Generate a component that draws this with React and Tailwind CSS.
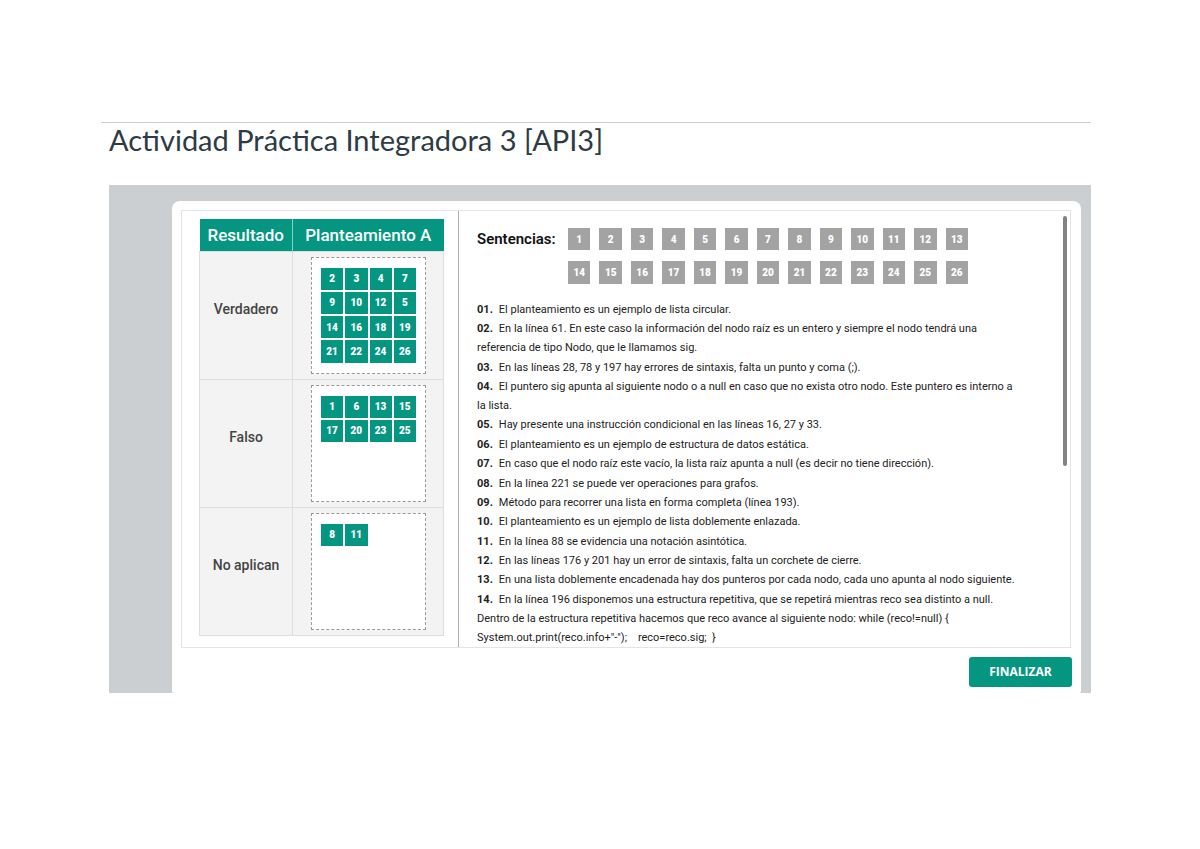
import React, { useState } from "react";

const results = [
    { label: "Verdadero", items: [2, 3, 4, 7, 9, 10, 12, 5, 14, 16, 18, 19, 21, 22, 24, 26] },
    { label: "Falso", items: [1, 6, 13, 15, 17, 20, 23, 25] },
    { label: "No aplican", items: [8, 11] },
];

// one entry per sentence, split where the text breaks
const sentences = [
    ["El planteamiento es un ejemplo de lista circular."],
    [
        "En la línea 61. En este caso la información del nodo raíz es un entero y siempre el nodo tendrá una",
        "referencia de tipo Nodo, que le llamamos sig.",
    ],
    ["En las líneas 28, 78 y 197 hay errores de sintaxis, falta un punto y coma (;)."],
    [
        "El puntero sig apunta al siguiente nodo o a null en caso que no exista otro nodo. Este puntero es interno a",
        "la lista.",
    ],
    ["Hay presente una instrucción condicional en las líneas 16, 27 y 33."],
    ["El planteamiento es un ejemplo de estructura de datos estática."],
    ["En caso que el nodo raíz este vacío, la lista raíz apunta a null (es decir no tiene dirección)."],
    ["En la línea 221 se puede ver operaciones para grafos."],
    ["Método para recorrer una lista en forma completa (línea 193)."],
    ["El planteamiento es un ejemplo de lista doblemente enlazada."],
    ["En la línea 88 se evidencia una notación asintótica."],
    ["En las líneas 176 y 201 hay un error de sintaxis, falta un corchete de cierre."],
    ["En una lista doblemente encadenada hay dos punteros por cada nodo, cada uno apunta al nodo siguiente."],
    [
        "En la línea 196 disponemos una estructura repetitiva, que se repetirá mientras reco sea distinto a null.",
        "Dentro de la estructura repetitiva hacemos que reco avance al siguiente nodo: while (reco!=null) {",
        "System.out.print(reco.info+\"-\");    reco=reco.sig;  }",
    ],
];

const numbers = Array.from({ length: 26 }, (_, i) => i + 1);

const ResultsTable = () => (
    <table className="w-[245px] table-fixed border-collapse text-center">
        <thead>
            <tr className="h-8 bg-[#059681] text-[17px] leading-6 text-white">
                <th scope="col" className="w-[93px] border-r border-[#8fcdc3] font-medium">Resultado</th>
                <th scope="col" className="font-medium">Planteamiento A</th>
            </tr>
        </thead>
        <tbody>
            {results.map((row) => (
                <tr key={row.label} className="h-32 bg-[#f3f3f3]">
                    <th scope="row" className="border border-[#dedede] pb-3 text-sm font-medium text-[#444444]">
                        {row.label}
                    </th>
                    <td className="border border-[#dedede] p-0">
                        <div className="ml-[18px] h-[117px] w-[115px] border border-dashed border-[#999999] bg-white px-[9px] pt-[10px]">
                            <div className="grid grid-cols-4 gap-[2px]">
                                {row.items.map((n) => (
                                    <button
                                        key={n}
                                        type="button"
                                        className="flex aspect-square items-center justify-center bg-[#059681] text-[10px] font-black text-white"
                                    >
                                        {n}
                                    </button>
                                ))}
                            </div>
                        </div>
                    </td>
                </tr>
            ))}
        </tbody>
    </table>
);

const App = () => {
    const [selected, setSelected] = useState(null);

    return (
        <div className="min-h-screen bg-white pt-[122px] pr-[109px] pl-[101px] font-[Roboto,sans-serif]">
            <div className="border-t border-[#c7cdd1] pl-2">
                <h1 className="h-[62px] font-[Lato,sans-serif] text-[29px] leading-[34px] text-[#2d3b45]">
                    Actividad Práctica Integradora 3 [API3]
                </h1>
                <main className="bg-[#cbcfd2] pt-4 pr-[10px] pl-[63px]">
                    <div className="rounded-t-lg rounded-b-xs bg-white px-[9px] pt-[9px] pb-[6px]">
                        <div className="mr-px flex h-[438px] border border-[#e4e4e4]">
                            <section className="w-[277px] shrink-0 border-r border-[#b0b0b0] pt-2 pl-[17px]">
                                <ResultsTable />
                            </section>
                            <section className="relative min-w-0 flex-1">
                                <div className="flex h-full flex-col overflow-hidden pr-9 pl-[18px]">
                                    <div className="flex pt-[17px]">
                                        <h2 className="w-[91px] shrink-0 text-[15px] leading-[22px] font-semibold text-[#111111]">
                                            Sentencias:
                                        </h2>
                                        <div className="grid w-[400px] grid-cols-13 gap-x-[9px] gap-y-[11px]">
                                            {numbers.map((n) => (
                                                <button
                                                    key={n}
                                                    type="button"
                                                    aria-pressed={selected === n}
                                                    onClick={() => setSelected(n)}
                                                    className="flex aspect-square items-center justify-center bg-[#a3a3a3] text-[10px] font-black text-white"
                                                >
                                                    {n}
                                                </button>
                                            ))}
                                        </div>
                                    </div>
                                    <div className="mt-4 flex flex-1 flex-col justify-between text-[11px] leading-[19px] text-[#222222]">
                                        {sentences.map((lines, i) => (
                                            <div key={i}>
                                                {lines.map((line, j) => (
                                                    <p key={j} className="whitespace-pre-wrap">
                                                        {j === 0 && (
                                                            <b className="mr-[6px]">{String(i + 1).padStart(2, "0")}.</b>
                                                        )}
                                                        {line}
                                                    </p>
                                                ))}
                                            </div>
                                        ))}
                                    </div>
                                </div>
                                <div className="absolute top-[5px] right-[3px] h-[250px] w-1 rounded-full bg-[#828282]" />
                            </section>
                        </div>
                        <div className="mt-[9px] flex justify-end">
                            <button
                                type="button"
                                className="h-[30px] w-[103px] rounded-[3px] bg-[#059681] font-['Open_Sans',sans-serif] text-xs font-bold text-white"
                            >
                                FINALIZAR
                            </button>
                        </div>
                    </div>
                </main>
            </div>
        </div>
    );
};

export default App;
